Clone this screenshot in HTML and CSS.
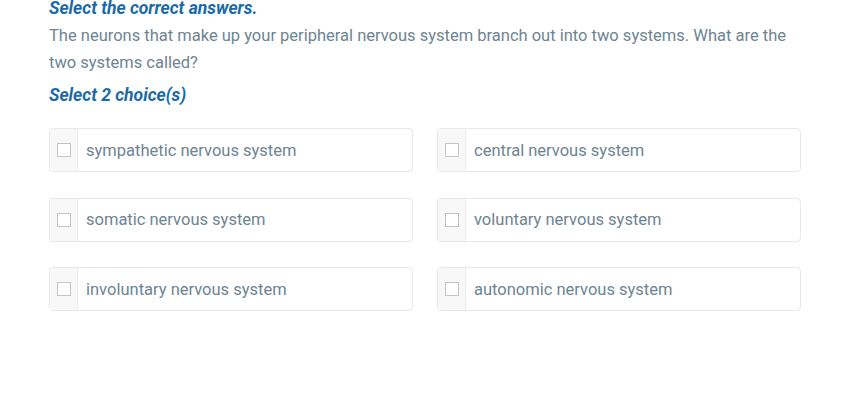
FILE: index.html
```html
<!DOCTYPE html>
<html>
<head>
<meta charset="utf-8">
<link rel="stylesheet" href="styles.css">
</head>
<body>
<div class="page">
  <h1 class="title">Select the correct answers.</h1>
  <p class="question">The neurons that make up your peripheral nervous system branch out into two systems. What are the two systems called?</p>
  <h2 class="hint">Select 2 choice(s)</h2>
  <div class="choices">
    <label class="choice"><span class="box"><span class="check"></span></span><span class="text">sympathetic nervous system</span></label>
    <label class="choice"><span class="box"><span class="check"></span></span><span class="text">central nervous system</span></label>
    <label class="choice"><span class="box"><span class="check"></span></span><span class="text">somatic nervous system</span></label>
    <label class="choice"><span class="box"><span class="check"></span></span><span class="text">voluntary nervous system</span></label>
    <label class="choice"><span class="box"><span class="check"></span></span><span class="text">involuntary nervous system</span></label>
    <label class="choice"><span class="box"><span class="check"></span></span><span class="text">autonomic nervous system</span></label>
  </div>
</div>
</body>
</html>
```
FILE: styles.css
```css
html, body {
  margin: 0;
  padding: 0;
  background: #ffffff;
}
.page {
  width: 751px;
  padding: 0 0 0 49px;
  margin-top: -3px;
  font-family: Roboto, "Liberation Sans", sans-serif;
}
.title {
  margin: 0;
  font-size: 17.5px;
  line-height: 22px;
  font-weight: 700;
  font-style: italic;
  color: #1a6aa7;
}
.question {
  margin: 3px 0 0 0;
  font-size: 16.5px;
  line-height: 27px;
  color: #6d8493;
}
.hint {
  margin: 8px 0 0 0;
  font-size: 17.5px;
  line-height: 22px;
  font-weight: 700;
  font-style: italic;
  color: #1a6aa7;
}
.choices {
  margin-top: 22px;
  display: grid;
  grid-template-columns: 364px 364px;
  column-gap: 24px;
  row-gap: 25.5px;
}
.choice {
  display: flex;
  height: 44px;
  box-sizing: border-box;
  border: 1px solid #e8e8e8;
  border-radius: 4px;
  overflow: hidden;
  background: #fff;
}
.box {
  width: 27px;
  flex: none;
  background: #f8f8f8;
  border-right: 1px solid #ececec;
  display: flex;
  align-items: center;
  justify-content: center;
}
.check {
  width: 12px;
  height: 12px;
  border: 1px solid #c4c4c4;
  background: #fff;
}
.text {
  display: flex;
  align-items: center;
  padding-left: 8px;
  font-size: 16.5px;
  color: #6d8493;
}
```
